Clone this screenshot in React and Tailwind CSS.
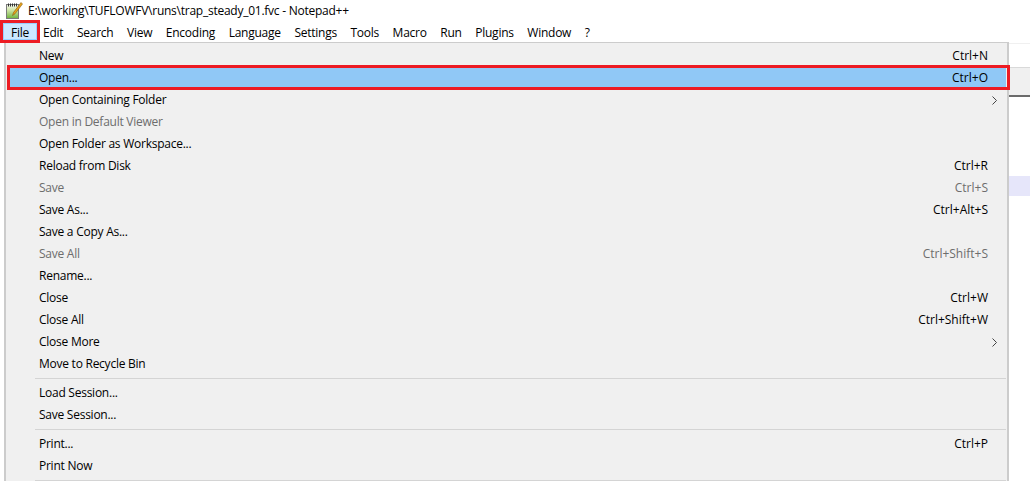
const MENU_BAR = ['Edit', 'Search', 'View', 'Encoding', 'Language', 'Settings', 'Tools', 'Macro', 'Run', 'Plugins', 'Window', '?'];

const ITEMS = [
  { label: 'New', shortcut: 'Ctrl+N' },
  { label: 'Open...', shortcut: 'Ctrl+O', active: true },
  { label: 'Open Containing Folder', arrow: true },
  { label: 'Open in Default Viewer', disabled: true },
  { label: 'Open Folder as Workspace...' },
  { label: 'Reload from Disk', shortcut: 'Ctrl+R' },
  { label: 'Save', shortcut: 'Ctrl+S', disabled: true },
  { label: 'Save As...', shortcut: 'Ctrl+Alt+S' },
  { label: 'Save a Copy As...' },
  { label: 'Save All', shortcut: 'Ctrl+Shift+S', disabled: true },
  { label: 'Rename...' },
  { label: 'Close', shortcut: 'Ctrl+W' },
  { label: 'Close All', shortcut: 'Ctrl+Shift+W' },
  { label: 'Close More', arrow: true },
  { label: 'Move to Recycle Bin' },
  { separator: true },
  { label: 'Load Session...' },
  { label: 'Save Session...' },
  { separator: true },
  { label: 'Print...', shortcut: 'Ctrl+P' },
  { label: 'Print Now' },
  { separator: true },
];

function NotepadIcon() {
  return (
    <svg width="17" height="18" viewBox="0 0 17 18" className="shrink-0">
      <defs>
        <linearGradient id="page" x1="0" y1="0" x2="0" y2="1">
          <stop offset="0" stopColor="#f6f6f0" />
          <stop offset="0.35" stopColor="#d5e8b0" />
          <stop offset="1" stopColor="#6fb33c" />
        </linearGradient>
      </defs>
      <rect x="0.5" y="2.5" width="12" height="14" fill="url(#page)" stroke="#7a7a7a" />
      <path d="M2 3h1M4 3h1M6 3h1M8 3h1M10 3h1" stroke="#333" strokeWidth="3" />
      <path d="M15 0.5 7.5 10.5 6.5 13.5 9 11.8 16.5 2z" fill="#e8a317" stroke="#8a5a10" strokeWidth="0.6" />
    </svg>
  );
}

function Arrow() {
  return (
    <svg width="5" height="9" viewBox="0 0 5 9" className="-mr-[9px]">
      <path d="M0.5 0.5 4.5 4.5 0.5 8.5" fill="none" stroke="#444" />
    </svg>
  );
}

function MenuRow({ item }) {
  if (item.separator) {
    return (
      <div className="pl-[29px] h-[7px] flex items-center">
        <div className="h-px w-full bg-[#d4d4d4]" />
      </div>
    );
  }
  const tone = item.disabled ? 'text-[#6d6d6d]' : 'text-black';
  const box = item.active ? 'ml-px pl-[32px] bg-[#90c8f6]' : 'pl-[33px]';
  return (
    <div className={`relative h-[22px] flex items-center justify-between pr-[18px] ${tone} ${box}`}>
      <span>{item.label}</span>
      {item.shortcut && <span className="tracking-normal">{item.shortcut}</span>}
      {item.arrow && <Arrow />}
      {item.active && (
        <div className="absolute left-0 right-[-4px] top-[-2px] bottom-[-1px] border-[3px] border-[#ed1c24]" />
      )}
    </div>
  );
}

export default function App() {
  return (
    <div className="relative h-[494px] w-[1030px] overflow-hidden bg-white text-[12px] text-black font-['Open_Sans','Noto_Sans',sans-serif] tracking-[-0.25px]">
      <div className="h-[20px] pt-px flex items-center pl-[6px] gap-[5px]">
        <NotepadIcon />
        <span>E:\working\TUFLOWFV\runs\trap_steady_01.fvc - Notepad++</span>
      </div>
      <div className="h-[23px] flex items-center">
        <div className="relative z-10 h-[23px] w-[40px] border-[3px] border-[#ed1c24]">
          <div className="h-full flex items-center justify-center pt-[2px] bg-[#cce8ff] border border-[#99d1ff]">File</div>
        </div>
        <div className="flex ml-[3px] pt-[2px] gap-[13.6px]">
          {MENU_BAR.map((name) => (
            <span key={name}>{name}</span>
          ))}
        </div>
      </div>

      {/* content behind the open menu */}
      <div className="flex flex-col items-end">
        <div className="h-px w-[21px] bg-[#f0f0f0]" />
        <div className="h-px w-[21px] mt-[23px] bg-[#d9d9d9]" />
        <div className="h-[27px] w-[21px] bg-[#f0f0f0]" />
        <div className="h-[2px] w-[21px] bg-[#6b6b6b]" />
        <div className="mt-[79px] h-[20px] w-[21px] bg-[#e6e6fa]" />
      </div>

      <div className="absolute left-[4px] top-[42px] w-[1005px] h-[439px] bg-[#f0f0f0] border-l-2 border-r-2 border-t border-[#cccccc] pt-[2px] pr-px">
        {ITEMS.map((item, i) => (
          <MenuRow key={i} item={item} />
        ))}
      </div>
    </div>
  );
}
